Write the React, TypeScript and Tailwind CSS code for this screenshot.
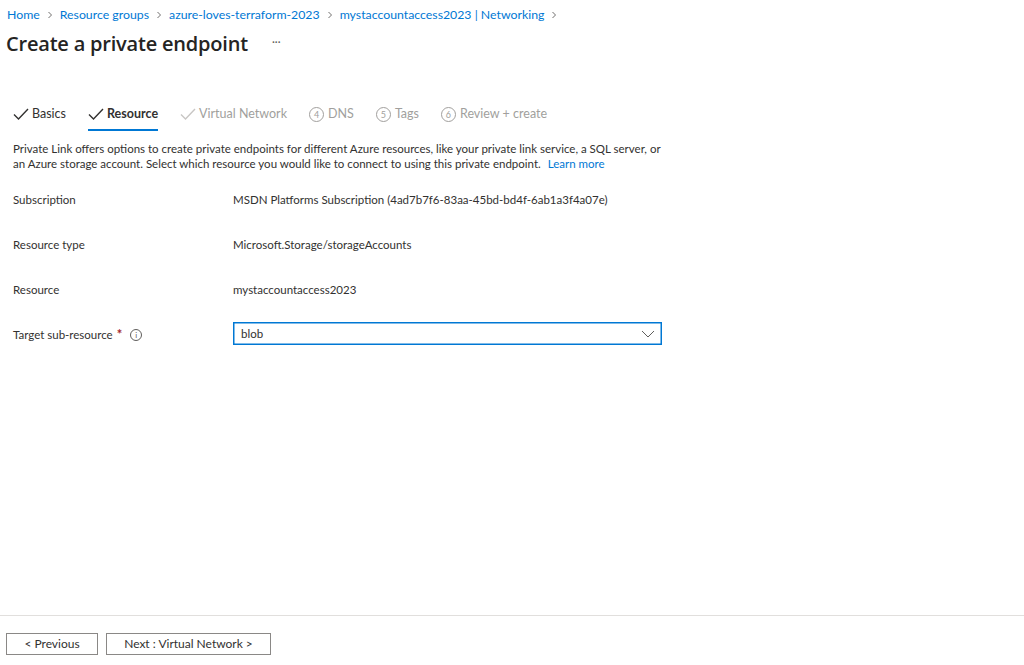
import { Fragment } from "react";

const font = { fontFamily: 'Lato, "Noto Sans", Arial, sans-serif' };

function Chevron() {
  return (
    <svg width="8" height="8" viewBox="0 0 8 8" className="mx-[6px] text-[#605e5c]">
      <path d="M2.5 1 L5.5 4 L2.5 7" fill="none" stroke="currentColor" strokeWidth="0.9" />
    </svg>
  );
}

function Check({ color }: { color: string }) {
  return (
    <svg width="16" height="14" viewBox="0 0 16 14" className="mr-[3px]">
      <path d="M1 7.5 L5.5 12 L15 2" fill="none" stroke={color} strokeWidth="1.4" />
    </svg>
  );
}

function Num({ n }: { n: number }) {
  return (
    <span className="mr-[4px] inline-flex h-[15px] w-[15px] items-center justify-center rounded-full border border-[#a19f9d] text-[9px] leading-none">
      {n}
    </span>
  );
}

export default function App() {
  const crumbs = ["Home", "Resource groups", "azure-loves-terraform-2023", "mystaccountaccess2023 | Networking"];
  const rows = [
    ["Subscription", "MSDN Platforms Subscription (4ad7b7f6-83aa-45bd-bd4f-6ab1a3f4a07e)"],
    ["Resource type", "Microsoft.Storage/storageAccounts"],
    ["Resource", "mystaccountaccess2023"],
  ];

  return (
    <div className="flex h-[665px] w-[1024px] flex-col bg-white text-[#323130]" style={font}>
      <div className="flex-1">
        {/* breadcrumb */}
        <div className="flex h-[30px] items-center pl-[7px] text-[12.3px] text-[#0078d4]">
          {crumbs.map((c) => (
            <Fragment key={c}>
              <span>{c}</span>
              <Chevron />
            </Fragment>
          ))}
        </div>

        {/* title */}
        <div className="flex h-[28px] items-center pl-[6px]">
          <h1 className="text-[20px] font-semibold tracking-[-0.2px] text-[#252423]" style={{ fontFamily: '"Open Sans", Arial, sans-serif' }}>
            Create a private endpoint
          </h1>
          <span className="ml-[24px] pb-[4px] text-[11px] text-[#605e5c]">···</span>
        </div>

        {/* tabs */}
        <div className="mt-[43px] flex h-[30px] items-end gap-[22px] pl-[13px] text-[12.5px]">
          <div className="flex h-[30px] items-center pb-[4px]">
            <Check color="#323130" />
            <span>Basics</span>
          </div>
          <div className="flex h-[30px] items-center border-b-2 border-[#0078d4] pb-[2px] font-bold">
            <Check color="#323130" />
            <span>Resource</span>
          </div>
          <div className="flex h-[30px] items-center pb-[4px] text-[#a19f9d]">
            <Check color="#c8c6c4" />
            <span>Virtual Network</span>
          </div>
          <div className="flex h-[30px] items-center pb-[4px] text-[#a19f9d]">
            <Num n={4} />
            <span>DNS</span>
          </div>
          <div className="flex h-[30px] items-center pb-[4px] text-[#a19f9d]">
            <Num n={5} />
            <span>Tags</span>
          </div>
          <div className="flex h-[30px] items-center pb-[4px] text-[#a19f9d]">
            <Num n={6} />
            <span>Review + create</span>
          </div>
        </div>

        {/* description */}
        <p className="mt-[10px] w-[670px] pl-[13px] text-[11.5px] leading-[15px]">
          Private Link offers options to create private endpoints for different Azure resources, like your private link service, a SQL server, or an Azure storage account. Select which resource you would like to connect to using this private endpoint.
          <span className="ml-[7px] text-[#0078d4]">Learn more</span>
        </p>

        {/* rows */}
        <div className="mt-[18px] flex flex-col gap-[23px] pl-[13px] text-[11.5px]">
          {rows.map(([k, v]) => (
            <div key={k} className="flex h-[22px] items-center">
              <div className="w-[220px]">{k}</div>
              <div>{v}</div>
            </div>
          ))}
          <div className="flex h-[22px] items-center">
            <div className="flex w-[220px] items-center">
              <span>Target sub-resource</span>
              <span className="ml-[4px] text-[13px] font-bold text-[#a4262c]">*</span>
              <span className="ml-[8px] inline-flex h-[12px] w-[12px] items-center justify-center rounded-full border border-[#605e5c] text-[8px] leading-none text-[#605e5c]">i</span>
            </div>
            <div className="-mt-[3px] flex h-[23px] w-[429px] items-center justify-between border border-[#0078d4] pl-[7px] pr-[6px] shadow-[inset_0_0_0_0.5px_#0078d4]">
              <span>blob</span>
              <svg width="14" height="8" viewBox="0 0 14 8">
                <path d="M1 1 L7 7 L13 1" fill="none" stroke="#605e5c" strokeWidth="1" />
              </svg>
            </div>
          </div>
        </div>
      </div>

      {/* footer */}
      <div className="flex h-[50px] items-start gap-[8px] border-t border-[#e1dfdd] pl-[6px] pt-[17px] text-[12px]">
        <button className="h-[22px] w-[92px] border border-[#8a8886] bg-white">&lt; Previous</button>
        <button className="h-[22px] w-[165px] border border-[#8a8886] bg-white">Next : Virtual Network &gt;</button>
      </div>
    </div>
  );
}
